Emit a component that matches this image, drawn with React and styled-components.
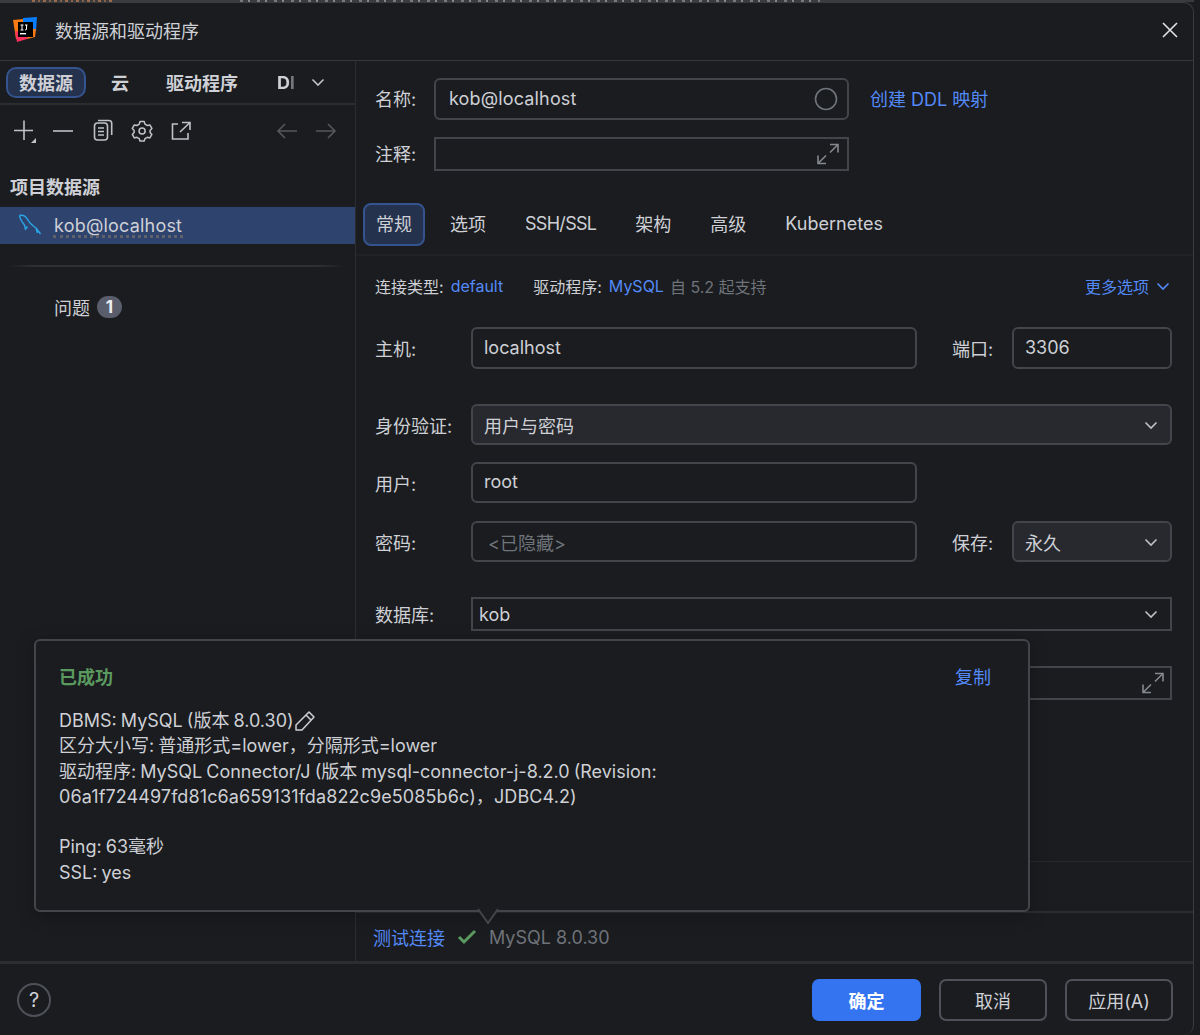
import React from 'react'
import styled, { createGlobalStyle } from 'styled-components'

const Global = createGlobalStyle`
  html, body {
    margin: 0;
    padding: 0;
    background: #1a1c1f;
  }
  * {
    box-sizing: border-box;
  }
`

const FONT = `Inter, "Noto Sans CJK SC", "Noto Sans", sans-serif`
const TEXT = '#ced0d6'
const BLUE = '#548af7'
const LINE = '#2b2d30'
const FIELD = '#43454a'

const Page = styled.div`
  width: 1200px;
  height: 1035px;
  padding-right: 6px;
  display: flex;
  flex-direction: column;
  background: #1a1c1f;
  font-family: ${FONT};
  font-size: 18px;
  color: ${TEXT};
  overflow: hidden;
`
// a sliver of the IDE window that shows above the dialog
const BehindStrip = styled.div`
  height: 2px;
  flex: none;
  background:
    repeating-linear-gradient(90deg, #9a6a4c 0 3px, #3a3b3d 3px 6px, #85604a 6px 8px, #3a3b3d 8px 11px) 32px 0 / 80px 100% no-repeat,
    repeating-linear-gradient(90deg, #77797d 0 3px, #3a3b3d 3px 8px, #85878b 8px 10px, #3a3b3d 10px 17px) 240px 0 / 580px 100% no-repeat,
    #3a3b3d;
`
const Dialog = styled.div`
  position: relative;
  flex: 1;
  min-height: 0;
  display: flex;
  flex-direction: column;
  background: #1a1c1f;
  border-right: 1px solid #3a3b3d;
  border-top: 1px solid #3a3b3d;
  border-top-right-radius: 10px;
  border-bottom-right-radius: 10px;
`
const TitleBar = styled.div`
  height: 58px;
  flex: none;
  display: flex;
  align-items: center;
  padding: 0 14px 4px 13px;
  border-bottom: 1px solid #35373a;
`
const TitleText = styled.span`
  margin-left: 18px;
  flex: 1;
`
const Body = styled.div`
  flex: 1;
  min-height: 0;
  display: flex;
`
const Side = styled.div`
  width: 356px;
  flex: none;
  border-right: 1px solid ${LINE};
`
const SideTabs = styled.div`
  height: 44px;
  display: flex;
  align-items: center;
  padding-left: 6px;
  border-bottom: 2px solid ${LINE};
  font-weight: 700;
`
const SideTab = styled.div`
  height: 31px;
  display: flex;
  align-items: center;
  padding: 0 11px;
  margin-right: ${({ $gap }) => $gap}px;
  border-radius: 10px;
  border: 2px solid ${({ $active }) => ($active ? '#35538f' : 'transparent')};
  background: ${({ $active }) => ($active ? '#25324d' : 'transparent')};
`
const FadedTab = styled.span`
  width: 20px;
  overflow: hidden;
  margin-right: 14px;
  -webkit-mask-image: linear-gradient(90deg, #000 55%, transparent);
  mask-image: linear-gradient(90deg, #000 55%, transparent);
`
const SideTools = styled.div`
  height: 52px;
  display: flex;
  align-items: center;
  padding-left: 12px;
  padding-right: 17px;
`
const ToolIcon = styled.svg`
  width: 24px;
  height: 24px;
  flex: none;
  margin-right: ${({ $gap }) => $gap}px;
  margin-left: ${({ $push }) => ($push ? 'auto' : '0')};
  fill: none;
  stroke: ${({ $dim }) => ($dim ? '#55575b' : '#bfc1c6')};
  stroke-width: 1.6;
`
const GroupTitle = styled.div`
  height: 28px;
  margin-top: 15px;
  display: flex;
  align-items: center;
  padding-left: 10px;
  font-weight: 700;
`
const TreeRow = styled.div`
  height: 37px;
  margin-top: 7px;
  display: flex;
  align-items: center;
  padding-left: 18px;
  background: #2e436e;
`
const TreeLabel = styled.span`
  margin-left: 11px;
  padding: 3px 1px 0;
  line-height: 18px;
  letter-spacing: 0.2px;
  border-bottom: 3px dotted #5f626a;
`
const SideRule = styled.div`
  height: 2px;
  margin: 21px 10px 0 8px;
  background: linear-gradient(90deg, transparent, #2e3033 8%, #2e3033 92%, transparent);
`
const Problems = styled.div`
  margin-top: 27px;
  padding-left: 54px;
  display: flex;
  align-items: center;
  gap: 7px;
`
const Badge = styled.span`
  width: 25px;
  height: 22px;
  border-radius: 11px;
  background: #5a5d6b;
  color: #eceef2;
  font-size: 17px;
  font-weight: 700;
  display: flex;
  align-items: center;
  justify-content: center;
`
const Main = styled.div`
  flex: 1;
  min-width: 0;
  display: flex;
  flex-direction: column;
`
const Pane = styled.div`
  flex: 1;
  min-height: 0;
  padding: 17px 21px 0 19px;
`
const TopRow = styled.div`
  display: flex;
  align-items: center;
  margin-bottom: ${({ $mb }) => $mb || 0}px;
`
const TopLabel = styled.span`
  width: 59px;
  flex: none;
  margin-bottom: 3px;
`
const TopField = styled.div`
  position: relative;
  width: 415px;
  height: ${({ $h }) => $h}px;
  display: flex;
  align-items: center;
  justify-content: space-between;
  padding: 0 7px 0 13px;
  border: 2px solid ${FIELD};
  border-radius: ${({ $round }) => ($round ? '6px' : '0')};
`
const FieldName = styled.span`
  letter-spacing: 0.15px;
  margin-bottom: 2px;
`
const LoadingRing = styled.svg`
  width: 24px;
  height: 24px;
  margin-right: 2px;
  fill: none;
  stroke: #6f737a;
  stroke-width: 1.6;
`
const Link = styled.a`
  color: ${BLUE};
  margin-left: ${({ $ml }) => $ml || 0}px;
  margin-bottom: ${({ $mb }) => $mb || 0}px;
  font-size: ${({ $size }) => $size || 18}px;
`
const Tabs = styled.div`
  display: flex;
  align-items: center;
  gap: 35px;
  height: 43px;
  margin-left: -12px;
`
const Tab = styled.div`
  height: 43px;
  display: flex;
  align-items: center;
  border-radius: 8px;
  letter-spacing: ${({ $tight }) => ($tight ? '-0.7px' : '0')};
  margin-right: ${({ $active }) => ($active ? '-12px' : '0')};
  border: 2px solid ${({ $active }) => ($active ? '#35538f' : 'transparent')};
  background: ${({ $active }) => ($active ? '#25324d' : 'transparent')};
  padding: 0 ${({ $active }) => ($active ? '11px' : '0')} 3px;
`
const TabRule = styled.div`
  height: 2px;
  margin: 8px -21px 0 -19px;
  background: #202225;
`
const InfoRow = styled.div`
  display: flex;
  align-items: center;
  height: 24px;
  margin-top: 18px;
  font-size: 16px;
`
const Muted = styled.span`
  color: #6f737a;
  margin-left: ${({ $ml }) => $ml || 0}px;
`
const InfoLabel = styled.span`
  margin-left: ${({ $ml }) => $ml || 0}px;
  margin-right: 7px;
`
const More = styled.div`
  margin-left: auto;
  padding-right: 2px;
  display: flex;
  align-items: center;
  gap: 7px;
`
const Form = styled.div`
  display: grid;
  grid-template-columns: 96px 446px 35px 60px 160px;
  align-items: center;
  margin-top: 29px;
`
const RowLabel = styled.span`
  grid-column: ${({ $col }) => $col || 1};
  margin-top: ${({ $mt }) => $mt || 0}px;
`
const Field = styled.div`
  grid-column: ${({ $span }) => $span};
  height: ${({ $h }) => $h || 41}px;
  margin-top: ${({ $mt }) => $mt || 0}px;
  display: flex;
  align-items: center;
  justify-content: space-between;
  padding-left: ${({ $square, $placeholder }) => ($square ? 6 : $placeholder ? 15 : 11)}px;
  padding-right: ${({ $square }) => ($square ? 5 : 12)}px;
  padding-bottom: ${({ $latin }) => ($latin ? 2 : 0)}px;
  border: 2px solid ${FIELD};
  border-radius: ${({ $square }) => ($square ? '0' : '6px')};
  background: ${({ $fill }) => ($fill ? '#27292e' : 'transparent')};
  color: ${({ $placeholder }) => ($placeholder ? '#6f737a' : TEXT)};
`
const Chevron = styled.svg`
  width: 14px;
  height: 14px;
  flex: none;
  margin-right: ${({ $mr }) => $mr || 0}px;
  fill: none;
  stroke: ${({ $color }) => $color || '#bfc1c6'};
  stroke-width: 1.6;
`
const Expand = styled.svg`
  width: 24px;
  height: 24px;
  flex: none;
  fill: none;
  stroke: #85888e;
  stroke-width: 1.6;
`
const Band = styled.div`
  height: 50px;
  flex: none;
  border-top: 1px solid #26282b;
`
const Shaded = styled.div`
  height: 50px;
  flex: none;
  border-top: 2px solid ${LINE};
  display: flex;
  align-items: center;
  padding-left: 17px;
`
const CheckMark = styled.svg`
  width: 20px;
  height: 16px;
  margin-left: 12px;
  fill: none;
  stroke: #5b9a5f;
  stroke-width: 3;
`
const StatusLabel = styled.span`
  color: #6f737a;
  margin-left: 12px;
`
const Footer = styled.div`
  height: 74px;
  flex: none;
  border-top: 3px solid ${LINE};
  display: flex;
  align-items: center;
  padding: 1px 20px 0 17px;
`
const Help = styled.div`
  width: 34px;
  height: 34px;
  border-radius: 50%;
  border: 2px solid #4e5157;
  display: flex;
  align-items: center;
  justify-content: center;
  margin-right: auto;
  font-size: 20px;
`
const Button = styled.div`
  width: ${({ $w }) => $w}px;
  height: 42px;
  margin-left: ${({ $ml }) => $ml || 0}px;
  display: flex;
  align-items: center;
  justify-content: center;
  border-radius: 7px;
  border: 2px solid ${({ $primary }) => ($primary ? '#3574f0' : '#4e5157')};
  background: ${({ $primary }) => ($primary ? '#3574f0' : 'transparent')};
  color: ${({ $primary }) => ($primary ? '#fff' : TEXT)};
  font-weight: ${({ $primary }) => ($primary ? 700 : 400)};
`
const Popup = styled.div`
  position: absolute;
  left: 34px;
  top: 636px;
  width: 996px;
  height: 273px;
  padding: 22px 37px 0 23px;
  background: #1a1c1f;
  border: 2px solid #43454a;
  border-radius: 6px;
  box-shadow: 0 4px 18px rgba(0, 0, 0, 0.25);
`
const PopupHead = styled.div`
  display: flex;
  justify-content: space-between;
  height: 26px;
  align-items: center;
`
const Success = styled.span`
  color: #5b9a5f;
  font-weight: 700;
`
const PopupBody = styled.div`
  margin-top: 19px;
  line-height: 25.3px;
  word-spacing: -1px;
`
const HashLine = styled.span`
  letter-spacing: 0.1px;
`
const Pencil = styled.svg`
  width: 22px;
  height: 22px;
  vertical-align: -5px;
  fill: none;
  stroke: #ced0d6;
  stroke-width: 1.5;
`
const PopupTail = styled.svg`
  position: absolute;
  left: 441px;
  bottom: -16px;
  width: 22px;
  height: 16px;
  overflow: visible;
`

function JetLogo() {
  return (
    <svg width='24' height='25' viewBox='0 0 24 25'>
      <path d='M0 3 L11 2 L11 20 L3 22 Z' fill='#f97a12' />
      <path d='M10 1 L24 0 L23 14 L10 14 Z' fill='#087cfa' />
      <path d='M15 12 L23 12 L22 20 L14 22 Z' fill='#f97a12' />
      <path d='M2 14 L16 16 L14 22 L4 25 Z' fill='#fe315d' />
      <rect x='5' y='5' width='15' height='15' fill='#000' />
      <path d='M7.5 8 H10.5 M9 8 V13 M7.5 13 H10.5 M12 8 H14.5 M13.5 8 V12.5 L12 13' stroke='#fff' strokeWidth='1' fill='none' />
      <rect x='7' y='16' width='6' height='1.4' fill='#fff' />
    </svg>
  )
}

function CloseIcon() {
  return (
    <svg width='18' height='18' viewBox='0 0 18 18' fill='none' stroke='#dfe1e5' strokeWidth='1.6'>
      <path d='M2 2 L16 16 M16 2 L2 16' />
    </svg>
  )
}

function Dolphin() {
  return (
    <svg width='24' height='24' viewBox='0 0 24 24' fill='none' stroke='#2aa6e6' strokeWidth='1.5'>
      <path d='M1.5 1.5 C5 0.5 8 2.5 10 6 C12 10 15 12 18 14 L22.5 20 M1.5 1.5 C2 5 4 8 6.5 11 L7.5 15 L9.5 12.5 M18 14 L19.5 19' />
    </svg>
  )
}

function ChevronDown(props) {
  return (
    <Chevron viewBox='0 0 14 14' {...props}>
      <path d='M1.5 4.5 L7 10 L12.5 4.5' />
    </Chevron>
  )
}

function ExpandIcon() {
  return (
    <Expand viewBox='0 0 24 24'>
      <path d='M14 2.5 H22 V10.5 M22 2.5 L14 10.5 M10 13.5 L2 21.5 M2 13.5 V21.5 H10' />
    </Expand>
  )
}

function Gear() {
  return (
    <ToolIcon viewBox='0 0 24 24' $gap={15}>
      <g transform='translate(1.7 0.6) scale(0.95)'>
        <circle cx='12' cy='12' r='3.2' />
        <path d='M9.8 2 H14.2 L15 4.8 L17.5 6.2 L20.2 5.6 L22.3 9.3 L20.4 11.5 V13.5 L22.3 15.6 L20.2 19.3 L17.5 18.7 L15 20.1 L14.2 22.6 H9.8 L9 20.1 L6.5 18.7 L3.8 19.3 L1.7 15.6 L3.6 13.5 V11.5 L1.7 9.3 L3.8 5.6 L6.5 6.2 L9 4.8 Z' strokeLinejoin='round' />
      </g>
    </ToolIcon>
  )
}

export default function App() {
  return (
    <>
      <Global />
      <Page>
        <BehindStrip />
        <Dialog>
          <TitleBar>
            <JetLogo />
            <TitleText>数据源和驱动程序</TitleText>
            <CloseIcon />
          </TitleBar>
          <Body>
            <Side>
              <SideTabs>
                <SideTab $active $gap={12}>数据源</SideTab>
                <SideTab $gap={11}>云</SideTab>
                <SideTab $gap={26}>驱动程序</SideTab>
                <FadedTab>DI</FadedTab>
                <ChevronDown />
              </SideTabs>
              <SideTools>
                <ToolIcon viewBox='0 0 24 24' $gap={15}>
                  <path d='M12 1.5 V21 M2 11.5 H21' />
                  <path d='M24 19 V24 H19 Z' fill='#bfc1c6' stroke='none' />
                </ToolIcon>
                <ToolIcon viewBox='0 0 24 24' $gap={15}>
                  <path d='M2 12 H22' />
                </ToolIcon>
                <ToolIcon viewBox='0 0 24 24' $gap={15}>
                  <rect x='4.5' y='4' width='13' height='17' rx='3' />
                  <path d='M8 1.5 H19 A2.7 2.7 0 0 1 21.7 4.2 V16 M8 9 H14 M8 12.5 H14 M8 16 H14' />
                </ToolIcon>
                <Gear />
                <ToolIcon viewBox='0 0 24 24' $gap={0}>
                  <path d='M10 5 H4.5 V20 H20 V14 M14 3.5 H22 V11 M22 3.5 L12 13' />
                </ToolIcon>
                <ToolIcon viewBox='0 0 24 24' $gap={15} $push $dim>
                  <path d='M22 12 H3 M10 5 L3 12 L10 19' />
                </ToolIcon>
                <ToolIcon viewBox='0 0 24 24' $gap={0} $dim>
                  <path d='M2 12 H21 M14 5 L21 12 L14 19' />
                </ToolIcon>
              </SideTools>
              <GroupTitle>项目数据源</GroupTitle>
              <TreeRow>
                <Dolphin />
                <TreeLabel>kob@localhost</TreeLabel>
              </TreeRow>
              <SideRule />
              <Problems>
                问题
                <Badge>1</Badge>
              </Problems>
            </Side>
            <Main>
              <Pane>
                <TopRow $mb={17}>
                  <TopLabel>名称:</TopLabel>
                  <TopField $h={42} $round>
                    <FieldName>kob@localhost</FieldName>
                    <LoadingRing viewBox='0 0 24 24'>
                      <circle cx='12' cy='12' r='10.5' />
                    </LoadingRing>
                  </TopField>
                  <Link $ml={21} $mb={3}>创建 DDL 映射</Link>
                </TopRow>
                <TopRow $mb={32}>
                  <TopLabel>注释:</TopLabel>
                  <TopField $h={34}>
                    <span />
                    <ExpandIcon />
                  </TopField>
                </TopRow>
                <Tabs>
                  <Tab $active>常规</Tab>
                  <Tab>选项</Tab>
                  <Tab $tight>SSH/SSL</Tab>
                  <Tab>架构</Tab>
                  <Tab>高级</Tab>
                  <Tab>Kubernetes</Tab>
                </Tabs>
                <TabRule />
                <InfoRow>
                  <InfoLabel>连接类型:</InfoLabel>
                  <Link $size={16}>default</Link>
                  <InfoLabel $ml={30}>驱动程序:</InfoLabel>
                  <Link $size={16}>MySQL</Link>
                  <Muted $ml={6}>自 5.2 起支持</Muted>
                  <More>
                    <Link $size={16}>更多选项</Link>
                    <ChevronDown $color={BLUE} />
                  </More>
                </InfoRow>
                <Form>
                  <RowLabel>主机:</RowLabel>
                  <Field $span='2' $h={42} $latin>localhost</Field>
                  <RowLabel $col='4'>端口:</RowLabel>
                  <Field $span='5' $h={42} $latin>3306</Field>

                  <RowLabel $mt={35}>身份验证:</RowLabel>
                  <Field $span='2 / 6' $mt={35} $fill>
                    用户与密码
                    <ChevronDown />
                  </Field>

                  <RowLabel $mt={17}>用户:</RowLabel>
                  <Field $span='2' $mt={17} $latin>root</Field>
                  <span />

                  <RowLabel $mt={18}>密码:</RowLabel>
                  <Field $span='2' $mt={18} $placeholder>&lt;已隐藏&gt;</Field>
                  <RowLabel $col='4' $mt={18}>保存:</RowLabel>
                  <Field $span='5' $mt={18} $fill>
                    永久
                    <ChevronDown />
                  </Field>

                  <RowLabel $mt={35}>数据库:</RowLabel>
                  <Field $span='2 / 6' $mt={35} $h={34} $square>
                    kob
                    <ChevronDown $mr={7} />
                  </Field>

                  <span />
                  <Field $span='2 / 6' $mt={35} $h={34} $square>
                    <span />
                    <ExpandIcon />
                  </Field>
                </Form>
              </Pane>
              <Band />
              <Shaded>
                <Link>测试连接</Link>
                <CheckMark viewBox='0 0 20 16'>
                  <path d='M2 8 L7 13 L18 2' />
                </CheckMark>
                <StatusLabel>MySQL 8.0.30</StatusLabel>
              </Shaded>
            </Main>
          </Body>
          <Footer>
            <Help>?</Help>
            <Button $w={109} $primary>确定</Button>
            <Button $w={108} $ml={18}>取消</Button>
            <Button $w={108} $ml={18}>应用(A)</Button>
          </Footer>
          <Popup>
            <PopupHead>
              <Success>已成功</Success>
              <Link>复制</Link>
            </PopupHead>
            <PopupBody>
              DBMS: MySQL (版本 8.0.30)
              <Pencil viewBox='0 0 22 22'>
                <path d='M15 2 L20 7 L8 20 L2 20 L2 15 Z M12 5 L17 10' strokeLinejoin='round' />
              </Pencil>
              <br />
              区分大小写: 普通形式=lower，分隔形式=lower
              <br />
              驱动程序: MySQL Connector/J (版本 mysql-connector-j-8.2.0 (Revision:
              <br />
              <HashLine>06a1f724497fd81c6a659131fda822c9e5085b6c)，JDBC4.2)</HashLine>
              <br />
              <br />
              Ping: 63毫秒
              <br />
              SSL: yes
            </PopupBody>
            <PopupTail viewBox='0 0 22 16'>
              <path d='M0 -2 H22 L11 13 Z' fill='#1a1c1f' />
              <path d='M1 -1 L11 13 L21 -1' fill='none' stroke='#43454a' strokeWidth='2' />
            </PopupTail>
          </Popup>
        </Dialog>
      </Page>
    </>
  )
}
